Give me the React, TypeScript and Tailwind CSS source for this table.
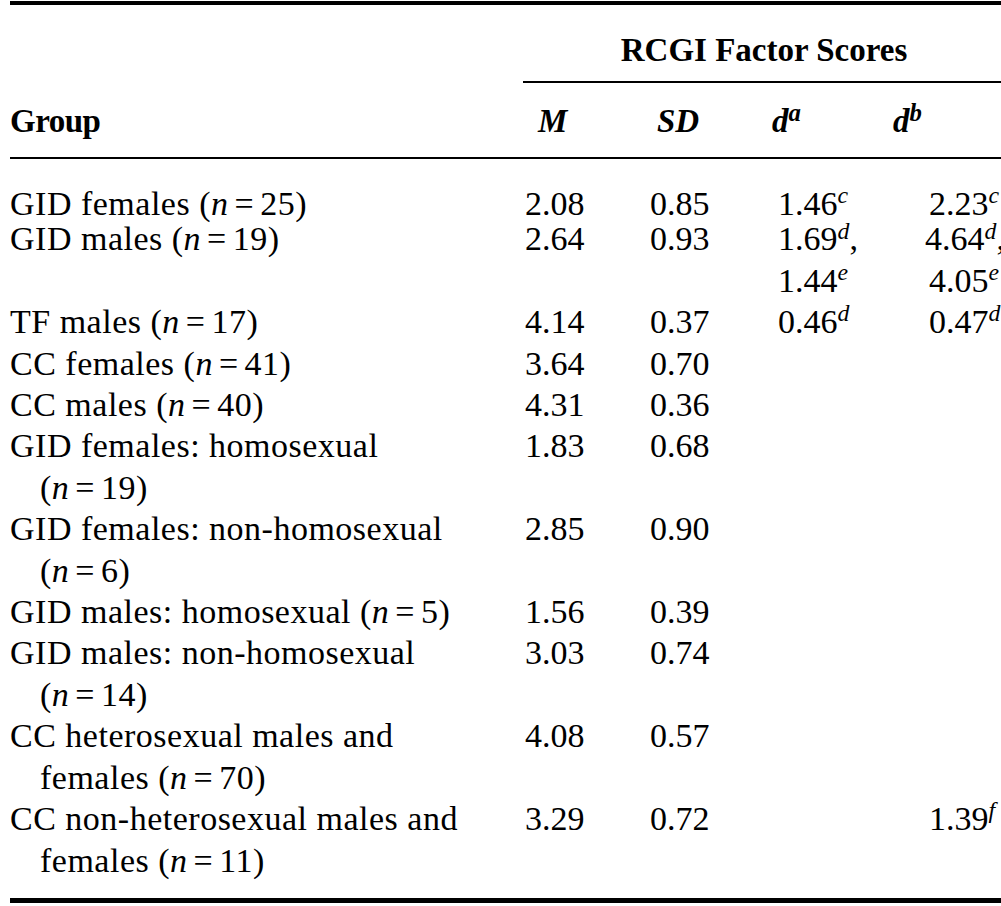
import type { ReactNode } from 'react'

type Row = {
  group: ReactNode[]
  m: string
  sd: string
  da?: ReactNode[]
  db?: ReactNode[]
}

const cols = 'grid grid-cols-[503px_127px_120px_120px_125px]'

function N({ v }: { v: string }) {
  return (
    <>
      (<i>n</i>
      <span className="px-[6px]">=</span>
      {v})
    </>
  )
}

function Sup({ children }: { children: ReactNode }) {
  return <sup className="text-[70%] italic">{children}</sup>
}

const rows: Row[] = [
  { group: [<>GID females <N v="25" /></>], m: '2.08', sd: '0.85', da: [<>1.46<Sup>c</Sup></>], db: [<>2.23<Sup>c</Sup></>] },
  {
    group: [<>GID males <N v="19" /></>],
    m: '2.64',
    sd: '0.93',
    da: [<>1.69<Sup>d</Sup>,</>, <>1.44<Sup>e</Sup></>],
    db: [<span className="-ml-[4px]">4.64<Sup>d</Sup>,</span>, <>4.05<Sup>e</Sup></>],
  },
  { group: [<>TF males <N v="17" /></>], m: '4.14', sd: '0.37', da: [<>0.46<Sup>d</Sup></>], db: [<>0.47<Sup>d</Sup></>] },
  { group: [<>CC females <N v="41" /></>], m: '3.64', sd: '0.70' },
  { group: [<>CC males <N v="40" /></>], m: '4.31', sd: '0.36' },
  { group: ['GID females: homosexual', <N v="19" />], m: '1.83', sd: '0.68' },
  { group: ['GID females: non-homosexual', <N v="6" />], m: '2.85', sd: '0.90' },
  { group: [<>GID males: homosexual <N v="5" /></>], m: '1.56', sd: '0.39' },
  { group: ['GID males: non-homosexual', <N v="14" />], m: '3.03', sd: '0.74' },
  { group: ['CC heterosexual males and', <>females <N v="70" /></>], m: '4.08', sd: '0.57' },
  { group: ['CC non-heterosexual males and', <>females <N v="11" /></>], m: '3.29', sd: '0.72', db: [<>1.39<Sup>f</Sup></>] },
]

function Lines({ items }: { items?: ReactNode[] }) {
  if (!items) return null
  return (
    <>
      {items.map((item, i) => (
        <div key={i}>{item}</div>
      ))}
    </>
  )
}

export default function App() {
  return (
    <div className="w-[1001px] overflow-hidden bg-white pt-px pb-[10px] font-['Liberation_Serif',serif] text-black">
      <div className="ml-[10px] w-[995px]">
        <div className="h-[4px] bg-black" />

        {/* header */}
        <div className={`${cols} mt-[25px] text-[33px] leading-[40px] font-bold`}>
          <div />
          <div className="col-span-4 pl-[10px] text-center">RCGI Factor Scores</div>
        </div>
        <div className={`${cols} mt-[11px]`}>
          <div />
          <div className="col-span-4 ml-[10px] h-[2px] bg-black" />
        </div>
        <div className={`${cols} mt-[18px] text-[33px] leading-[40px] font-bold`}>
          <div className="tracking-[-0.5px]">Group</div>
          <div className="pl-[25px] italic">M</div>
          <div className="pl-[17px] italic">SD</div>
          <div className="pl-[12px] italic">
            d<sup className="top-[-0.45em] text-[75%]">a</sup>
          </div>
          <div className="pl-[13px] italic">
            d<sup className="top-[-0.45em] text-[75%]">b</sup>
          </div>
        </div>
        <div className="mt-[16px] h-[2px] bg-black" />

        {/* body */}
        <div className="pt-[24px] pb-[17px] text-[34px] leading-[41.4px]">
          {rows.map((row, i) => (
            <div key={i} className={`${cols} ${i === 1 ? '-mt-[6px]' : ''}`}>
              <div className="tracking-[0.5px]">
                {row.group.map((g, j) => (
                  <div key={j} className={j > 0 ? 'pl-[30px]' : ''}>
                    {g}
                  </div>
                ))}
              </div>
              <div className="pl-[12px]">{row.m}</div>
              <div className="pl-[10px]">{row.sd}</div>
              <div className="pl-[18px]">
                <Lines items={row.da} />
              </div>
              <div className="pl-[49px] whitespace-nowrap">
                <Lines items={row.db} />
              </div>
            </div>
          ))}
        </div>
        <div className="h-[5px] bg-black" />
      </div>
    </div>
  )
}
